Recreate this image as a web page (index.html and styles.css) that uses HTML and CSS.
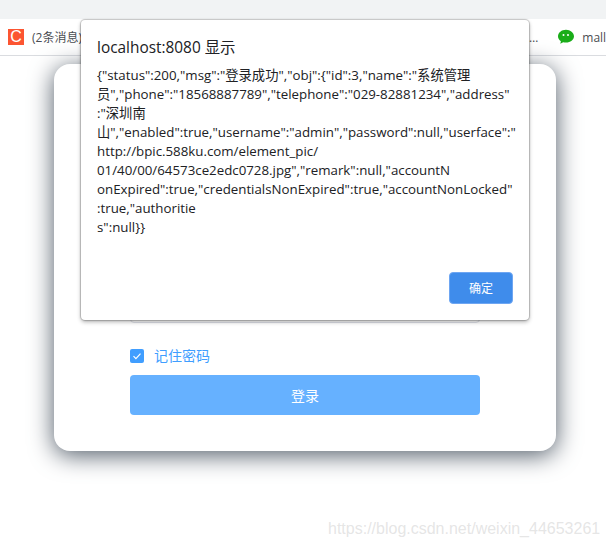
FILE: index.html
```html
<!DOCTYPE html>
<html lang="zh">
<head>
<meta charset="utf-8">
<title>登录</title>
<link rel="stylesheet" href="styles.css">
</head>
<body>
<div class="tabstrip"></div>
<nav class="bookmarks">
  <a class="bookmark"><span class="favicon">C</span><span>(2条消息)</span></a>
  <a class="bookmark bookmark-cut"><span>…</span></a>
  <a class="bookmark">
    <svg class="wechat" viewBox="0 0 16 16" width="16" height="16" aria-hidden="true">
      <path fill="#1aad19" d="M8 .8C3.600.8 0 3.700 0 7.300c0 2 1.100 3.700 2.900 4.900l-.6 2.600 2.900-1.600c.9.200 1.800.4 2.800.4 4.400 0 8-2.900 8-6.300S12.400.800 8 .800z"/>
      <circle cx="5.500" cy="6" r="1" fill="#fff"/>
      <circle cx="10" cy="6" r="1" fill="#fff"/>
    </svg>
    <span>mall</span>
  </a>
</nav>
<main class="page">
  <form class="card">
    <input class="field" type="text">
    <input class="field" type="password">
    <label class="remember">
      <span class="check">
        <svg viewBox="0 0 14 14" width="14" height="14" aria-hidden="true"><path d="M3.500 7.200l2.400 2.400 4.600-5" fill="none" stroke="#fff" stroke-width="1.200"/></svg>
      </span>
      <span>记住密码</span>
    </label>
    <button class="login" type="button">登录</button>
  </form>
</main>
<section class="dialog">
  <h2 class="dialog-title">localhost:8080 显示</h2>
  <p class="dialog-text">{"status":200,"msg":"登录成功","obj":{"id":3,"name":"系统管理<br>员","phone":"18568887789","telephone":"029-82881234","address"<br>:"深圳南<br>山","enabled":true,"username":"admin","password":null,"userface":"<br>http://bpic.588ku.com/element_pic/<br>01/40/00/64573ce2edc0728.jpg","remark":null,"accountN<br>onExpired":true,"credentialsNonExpired":true,"accountNonLocked"<br>:true,"authoritie<br>s":null}}</p>
  <div class="dialog-actions"><button class="confirm" type="button">确定</button></div>
</section>
<div class="watermark">https://blog.csdn.net/weixin_44653261</div>
</body>
</html>
```

FILE: styles.css
```css
* { box-sizing: border-box; }
html, body { margin: 0; height: 100%; overflow: hidden; }
body {
  background: #fff;
  font-family: "Open Sans", "Noto Sans CJK SC", sans-serif;
  color: #202124;
  position: relative;
}
.tabstrip { height: 19px; background: #f1f3f4; }
.bookmarks {
  height: 37px;
  background: #fff;
  border-bottom: 1px solid #dadce0;
  display: flex;
  align-items: center;
  padding: 0 0 0 8px;
  overflow: hidden;
  font-size: 12px;
  color: #4a4d52;
  white-space: nowrap;
}
.bookmark { display: flex; align-items: center; gap: 8px; flex: none; }
.bookmark-cut { margin-left: 447px; margin-right: 20px; }
.favicon {
  width: 16px;
  height: 16px;
  background: #fc5531;
  color: #fff;
  font: 16px/16px "Liberation Sans", sans-serif;
  text-align: center;
}
.wechat { display: block; }
.page { padding: 8px 50px 0 54px; }
.card {
  width: 502px;
  height: 387px;
  background: #fff;
  border-radius: 16px;
  box-shadow: 0 4px 24px #4f5a66;
  padding: 157px 76px 36px;
  display: flex;
  flex-direction: column;
}
.field {
  height: 40px;
  margin: 0 0 22px;
  border: 1px solid #dcdfe6;
  border-radius: 4px;
  padding: 0 15px;
  font: 14px "Open Sans", sans-serif;
  color: #606266;
}
.field + .field { margin-bottom: 26px; }
.remember {
  display: flex;
  align-items: center;
  gap: 10px;
  height: 14px;
  margin-bottom: 12px;
  font-size: 14px;
  line-height: 12px;
  color: #409eff;
}
.check { width: 14px; height: 14px; background: #409eff; border-radius: 2px; display: block; }
.check svg { display: block; }
.login {
  height: 40px;
  border: 0;
  border-radius: 4px;
  background: #66b1ff;
  color: #fff;
  font: 14px "Open Sans", "Noto Sans CJK SC", sans-serif;
}
.dialog {
  position: absolute;
  left: 81px;
  top: 20px;
  width: 448px;
  height: 300px;
  background: #fff;
  border-radius: 4px;
  box-shadow: 0 0 1px 1px rgba(0, 0, 0, .2), 0 2px 4px rgba(0, 0, 0, .3);
  padding: 18px 16px 16px;
  display: flex;
  flex-direction: column;
}
.dialog-title { margin: 0 0 8px; font-size: 15.400px; font-weight: 400; line-height: 20px; color: #202124; }
.dialog-text { margin: 0; flex: 1; font-size: 13.300px; line-height: 19px; white-space: nowrap; color: #202124; }
.dialog-actions { display: flex; justify-content: flex-end; }
.confirm {
  width: 64px;
  height: 32px;
  border: 1px solid #6ea6f2;
  border-radius: 4px;
  background: #3f8ceb;
  color: #fff;
  font: 12px "Open Sans", "Noto Sans CJK SC", sans-serif;
}
.watermark {
  position: absolute;
  left: 328px;
  top: 519px;
  font: 16px/20px "Liberation Sans", sans-serif;
  color: rgba(190, 190, 190, .4);
  white-space: nowrap;
}
```
